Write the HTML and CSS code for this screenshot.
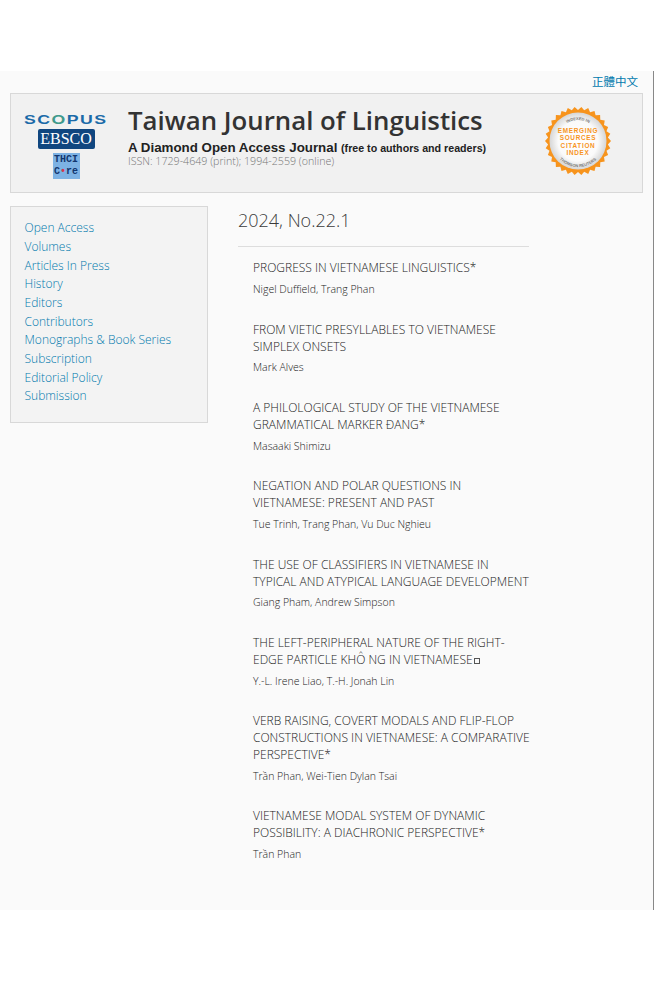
FILE: index.html
```html
<!DOCTYPE html>
<html>
<head>
    <title>Taiwan Journal of Linguistics</title>
    <link rel="stylesheet" href="styles.css">
</head>
<body>
    <div class="page">
        <div class="lang"><a href="#">正體中文</a></div>

        <div class="header">
            <div class="logos">
                <div class="scopus">SC<span class="scopus-o">O</span>PUS</div>
                <div class="ebsco">EBSCO</div>
                <div class="tci"><span>THCI</span><span>C<i class="tci-dot">•</i>re</span></div>
            </div>
            <div class="titles">
                <h1>Taiwan Journal of Linguistics</h1>
                <div class="tagline">A Diamond Open Access Journal <small>(free to authors and readers)</small></div>
                <div class="issn">ISSN: 1729-4649 (print); 1994-2559 (online)</div>
            </div>
            <svg class="badge" width="66" height="66" viewBox="0 0 66 66">
                <defs>
                    <radialGradient id="disc" cx="50%" cy="50%" r="50%">
                        <stop offset="0%" stop-color="#ffffff"/>
                        <stop offset="70%" stop-color="#fafafa"/>
                        <stop offset="100%" stop-color="#d6d6d6"/>
                    </radialGradient>
                    <path id="arc-top" d="M12 33 A21 21 0 0 1 54 33"/>
                    <path id="arc-bottom" d="M7 33 A26 26 0 0 0 59 33"/>
                </defs>
                <polygon fill="#f7941d" points="66,33 62.9,36.4 65.3,40.3 61.5,42.8 63.1,47.1 59,48.9 59.7,53.4 55.3,54.3 55.1,58.9 50.6,58.7 49.5,63.1 45.1,61.8 43.2,66 39.2,63.7 36.4,67.1 33,64 29.6,67.1 26.8,63.7 22.8,66 20.9,61.8 16.5,63.1 15.4,58.7 10.9,58.9 10.7,54.3 6.3,53.4 7,48.9 2.9,47.1 4.5,42.8 .7,40.3 3.1,36.4 0,33 3.1,29.6 .7,25.7 4.5,23.2 2.9,18.9 7,17.1 6.3,12.6 10.7,11.7 10.9,7.1 15.4,7.3 16.5,2.9 20.9,4.2 22.8,0 26.8,2.3 29.6,-1.1 33,2 36.4,-1.1 39.2,2.3 43.2,0 45.1,4.2 49.5,2.9 50.6,7.3 55.1,7.1 55.3,11.7 59.7,12.6 59,17.1 63.1,18.9 61.5,23.2 65.3,25.7 62.9,29.6"/>
                <circle cx="33" cy="33" r="28.5" fill="url(#disc)"/>
                <text class="badge-arc"><textPath href="#arc-top" startOffset="50%" text-anchor="middle">INDEXED IN</textPath></text>
                <text class="badge-main"><tspan x="33" y="24.5">EMERGING</tspan><tspan x="33" y="32">SOURCES</tspan><tspan x="33" y="39.5">CITATION</tspan><tspan x="33" y="47">INDEX</tspan></text>
                <text class="badge-arc"><textPath href="#arc-bottom" startOffset="50%" text-anchor="middle">THOMSON REUTERS</textPath></text>
            </svg>
        </div>

        <div class="columns">
            <ul class="sidebar">
                <li><a href="#">Open Access</a></li>
                <li><a href="#">Volumes</a></li>
                <li><a href="#">Articles In Press</a></li>
                <li><a href="#">History</a></li>
                <li><a href="#">Editors</a></li>
                <li><a href="#">Contributors</a></li>
                <li><a href="#">Monographs &amp; Book Series</a></li>
                <li><a href="#">Subscription</a></li>
                <li><a href="#">Editorial Policy</a></li>
                <li><a href="#">Submission</a></li>
            </ul>

            <div class="main">
                <h2>2024, No.22.1</h2>
                <div class="article">
                    <div class="article-title">PROGRESS IN VIETNAMESE LINGUISTICS*</div>
                    <div class="authors">Nigel Duffield, Trang Phan</div>
                </div>
                <div class="article">
                    <div class="article-title">FROM VIETIC PRESYLLABLES TO VIETNAMESE SIMPLEX ONSETS</div>
                    <div class="authors">Mark Alves</div>
                </div>
                <div class="article">
                    <div class="article-title">A PHILOLOGICAL STUDY OF THE VIETNAMESE GRAMMATICAL MARKER ĐANG*</div>
                    <div class="authors">Masaaki Shimizu</div>
                </div>
                <div class="article">
                    <div class="article-title">NEGATION AND POLAR QUESTIONS IN VIETNAMESE: PRESENT AND PAST</div>
                    <div class="authors">Tue Trinh, Trang Phan, Vu Duc Nghieu</div>
                </div>
                <div class="article">
                    <div class="article-title">THE USE OF CLASSIFIERS IN VIETNAMESE IN TYPICAL AND ATYPICAL LANGUAGE DEVELOPMENT</div>
                    <div class="authors">Giang Pham, Andrew Simpson</div>
                </div>
                <div class="article">
                    <div class="article-title">THE LEFT-PERIPHERAL NATURE OF THE RIGHT-EDGE PARTICLE KHÔ NG IN VIETNAMESE<span class="missing"></span></div>
                    <div class="authors">Y.-L. Irene Liao, T.-H. Jonah Lin</div>
                </div>
                <div class="article">
                    <div class="article-title">VERB RAISING, COVERT MODALS AND FLIP-FLOP CONSTRUCTIONS IN VIETNAMESE: A COMPARATIVE PERSPECTIVE*</div>
                    <div class="authors">Trần Phan, Wei-Tien Dylan Tsai</div>
                </div>
                <div class="article">
                    <div class="article-title">VIETNAMESE MODAL SYSTEM OF DYNAMIC POSSIBILITY: A DIACHRONIC PERSPECTIVE*</div>
                    <div class="authors">Trần Phan</div>
                </div>
            </div>
        </div>
    </div>
</body>
</html>
```

FILE: styles.css
```css
body { margin: 0; padding: 71px 0 71px; background: white; font-family: "Open Sans", sans-serif; font-weight: 300; color: #333; }
a { color: #0079ad; text-decoration: none; }

.page { box-sizing: border-box; height: 839px; padding: 0 10px; background: #fafafa; border-right: 1px solid #888; }
.lang { height: 22px; padding-right: 5px; text-align: right; font-family: "Noto Sans CJK TC", sans-serif; font-size: 11.5px; line-height: 20px; font-weight: 400; }

.header { box-sizing: border-box; display: flex; align-items: flex-start; height: 100px; background: #f1f1f1; border: 1px solid #d8d8d8; }
.logos { display: flex; flex-direction: column; align-items: center; width: 82px; margin: 20px 0 0 14px; }
.scopus { font-family: "Liberation Sans", sans-serif; font-weight: 700; font-size: 13px; line-height: 12px; letter-spacing: 1.1px; color: #1a6aa8; transform: scaleX(1.36); }
.scopus-o { color: #3f9a8c; }
.ebsco { width: 57px; height: 20px; margin-top: 3px; border-radius: 2px; background: #10467f; color: white; font-family: "Liberation Serif", serif; font-weight: 400; font-size: 16px; line-height: 20px; text-align: center; }
.tci { display: flex; flex-direction: column; align-items: center; justify-content: center; width: 27px; height: 26px; margin-top: 4px; background: #7db2e4; color: #12366e; font-family: "Liberation Mono", monospace; font-weight: 700; font-size: 10px; line-height: 12px; }
.tci-dot { color: #d8344a; font-style: normal; }

.titles { width: 401px; margin: 10px 0 0 21px; }
h1 { margin: 0; font-size: 25.8px; line-height: 32px; font-weight: 600; color: #333; white-space: nowrap; }
.tagline { margin-top: 5px; font-family: "Liberation Sans", sans-serif; font-size: 13.33px; line-height: 14px; font-weight: 700; color: #222; white-space: nowrap; }
.tagline small { font-size: 10.67px; }
.issn { font-size: 10.67px; line-height: 12px; color: #777; white-space: nowrap; }

.badge { margin: 14px 0 0 16px; overflow: visible; }
.badge-main { font-family: "Liberation Sans", sans-serif; font-size: 6.4px; letter-spacing: .7px; font-weight: 700; fill: #f7941d; text-anchor: middle; }
.badge-arc { font-family: "Liberation Sans", sans-serif; font-size: 4px; font-weight: 700; fill: #777; }

.columns { display: flex; align-items: flex-start; margin-top: 13px; }
.sidebar { box-sizing: border-box; width: 198px; height: 217px; flex-shrink: 0; margin: 0; padding: 12.15px 13.5px; list-style: none; background: #f3f3f3; border: 1px solid #d8d8d8; font-size: 12px; line-height: 18.7px; }

.main { box-sizing: border-box; width: 291px; margin-left: 30px; }
h2 { margin: 0 0 12.4px; padding-bottom: 11px; height: 29px; font-size: 18px; line-height: 29px; font-weight: 300; color: #3a3a3a; border-bottom: 1px solid #ddd; }
.article { padding-left: 15px; margin: 0 -4px 22.5px 0; }
.article-title { font-size: 12px; line-height: 17px; color: #222; }
.authors { margin-top: 4.8px; font-size: 10.5px; line-height: 17px; color: #222; }
.missing { display: inline-block; width: 6px; height: 6px; margin-left: 1px; border: 1px solid #555; box-sizing: border-box; }
```
